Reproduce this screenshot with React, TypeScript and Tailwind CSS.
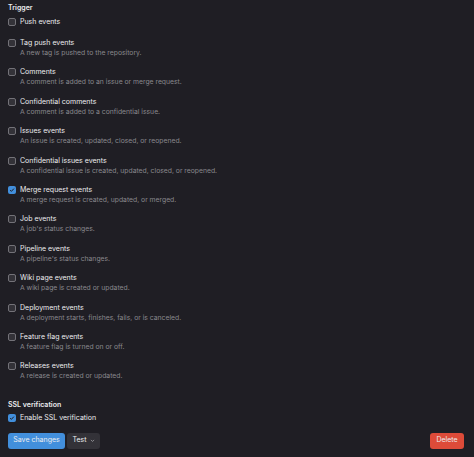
import React from 'react';

const events = [
  { label: 'Push events' },
  { label: 'Tag push events', desc: 'A new tag is pushed to the repository.' },
  { label: 'Comments', desc: 'A comment is added to an issue or merge request.' },
  { label: 'Confidential comments', desc: 'A comment is added to a confidential issue.' },
  { label: 'Issues events', desc: 'An issue is created, updated, closed, or reopened.' },
  { label: 'Confidential issues events', desc: 'A confidential issue is created, updated, closed, or reopened.' },
  { label: 'Merge request events', desc: 'A merge request is created, updated, or merged.', checked: true },
  { label: 'Job events', desc: "A job's status changes." },
  { label: 'Pipeline events', desc: "A pipeline's status changes." },
  { label: 'Wiki page events', desc: 'A wiki page is created or updated.' },
  { label: 'Deployment events', desc: 'A deployment starts, finishes, fails, or is canceled.' },
  { label: 'Feature flag events', desc: 'A feature flag is turned on or off.' },
  { label: 'Releases events', desc: 'A release is created or updated.' },
];

const Box = ({ checked }: { checked?: boolean }) =>
  checked ? (
    <span className="mt-[1px] flex h-[8px] w-[8px] shrink-0 items-center justify-center rounded-[2px] bg-[#428fdc]">
      <svg viewBox="0 0 8 8" className="h-[6px] w-[6px]">
        <path d="M1.5 4.2 3.2 5.8 6.5 2.2" fill="none" stroke="#1f1e24" strokeWidth="1.3" />
      </svg>
    </span>
  ) : (
    <span className="mt-[1px] h-[8px] w-[8px] shrink-0 rounded-[2px] border border-[#737278] bg-[#333238]" />
  );

const App = () => {
  return (
    <div
      className="h-[457px] w-[474px] overflow-hidden bg-[#1f1e24] px-[8px] pt-[3px] text-[#ececef]"
      style={{ fontFamily: 'Inter, "Noto Sans", sans-serif' }}
    >
      <div className="text-[7px] font-semibold leading-[10px]">Trigger</div>
      <div className="mt-[4px] flex flex-col">
        {events.map((e, i) => (
          <div key={i} className={`flex gap-[4px] ${e.desc ? 'h-[29.4px]' : 'h-[21px]'}`}>
            <Box checked={e.checked} />
            <div className="flex flex-col">
              <span className="text-[7px] leading-[10px]">{e.label}</span>
              {e.desc && <span className="text-[6.8px] leading-[10px] text-[#89888d]">{e.desc}</span>}
            </div>
          </div>
        ))}
      </div>
      <div className="mt-[9px] text-[7px] font-semibold leading-[10px]">SSL verification</div>
      <div className="mt-[3px] flex gap-[4px]">
        <Box checked />
        <span className="text-[7px] leading-[10px]">Enable SSL verification</span>
      </div>
      <div className="mt-[10px] flex items-center justify-between">
        <div className="flex gap-[2px]">
          <button className="h-[16px] w-[57px] rounded-[3px] bg-[#428fdc] text-[7px] text-[#ececef]">Save changes</button>
          <button className="flex h-[16px] w-[33px] items-center justify-center gap-[3px] rounded-[3px] bg-[#333238] text-[7px] text-[#ececef]">
            Test
            <svg viewBox="0 0 8 8" className="h-[5px] w-[5px]">
              <path d="M1.5 3 4 5.5 6.5 3" fill="none" stroke="#bfbfc3" strokeWidth="1" />
            </svg>
          </button>
        </div>
        <button className="mr-[2px] h-[16px] w-[34px] rounded-[3px] bg-[#dd4b39] text-[7px] text-[#ececef]">Delete</button>
      </div>
    </div>
  );
};

export default App;
